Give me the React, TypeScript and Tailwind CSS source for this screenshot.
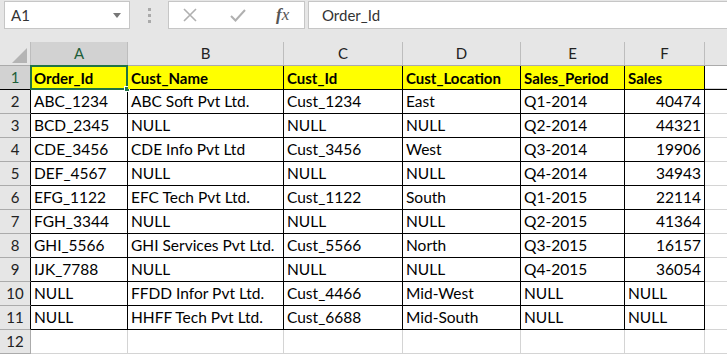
const cols = [
  { key: "A", w: "w-[97px]" },
  { key: "B", w: "w-[156px]" },
  { key: "C", w: "w-[119px]" },
  { key: "D", w: "w-[118px]" },
  { key: "E", w: "w-[104px]" },
  { key: "F", w: "w-[80px]" },
];

const header = ["Order_Id", "Cust_Name", "Cust_Id", "Cust_Location", "Sales_Period", "Sales"];

const rows = [
  ["ABC_1234", "ABC Soft Pvt Ltd.", "Cust_1234", "East", "Q1-2014", "40474"],
  ["BCD_2345", "NULL", "NULL", "NULL", "Q2-2014", "44321"],
  ["CDE_3456", "CDE Info Pvt Ltd", "Cust_3456", "West", "Q3-2014", "19906"],
  ["DEF_4567", "NULL", "NULL", "NULL", "Q4-2014", "34943"],
  ["EFG_1122", "EFC Tech Pvt Ltd.", "Cust_1122", "South", "Q1-2015", "22114"],
  ["FGH_3344", "NULL", "NULL", "NULL", "Q2-2015", "41364"],
  ["GHI_5566", "GHI Services Pvt Ltd.", "Cust_5566", "North", "Q3-2015", "16157"],
  ["IJK_7788", "NULL", "NULL", "NULL", "Q4-2015", "36054"],
  ["NULL", "FFDD Infor Pvt Ltd.", "Cust_4466", "Mid-West", "NULL", "NULL"],
  ["NULL", "HHFF Tech Pvt Ltd.", "Cust_6688", "Mid-South", "NULL", "NULL"],
];

const FormulaBar = () => (
  <div className="flex h-[42px] bg-[#e6e6e6] pt-[1px]">
    <div className="ml-[4px] flex h-[28px] w-[126px] items-center justify-between border border-[#c6c6c6] bg-white pl-[6px] pr-[8px]">
      <span className="text-[15px] text-[#333]">A1</span>
      <svg width="8" height="5" viewBox="0 0 8 5">
        <path d="M0 0h8L4 5z" fill="#777" />
      </svg>
    </div>
    <div className="flex h-[28px] w-[38px] flex-col items-center justify-center gap-[3px]">
      <span className="h-[3px] w-[3px] bg-[#aaa]" />
      <span className="h-[3px] w-[3px] bg-[#aaa]" />
      <span className="h-[3px] w-[3px] bg-[#aaa]" />
    </div>
    <div className="flex h-[28px] w-[137px] items-center border border-[#c6c6c6] bg-white">
      <svg className="ml-[14px]" width="14" height="14" viewBox="0 0 14 14">
        <path d="M1 1L13 13M13 1L1 13" stroke="#b0b0b0" strokeWidth="1.6" />
      </svg>
      <svg className="ml-[33px]" width="16" height="13" viewBox="0 0 16 13">
        <path d="M1 7l4.5 4.5L15 1" stroke="#b0b0b0" strokeWidth="2" fill="none" />
      </svg>
      <span className="ml-[30px] font-['Liberation_Serif'] text-[17px] italic text-[#555]">
        <span className="font-bold">f</span>x
      </span>
    </div>
    <div className="ml-[3px] flex h-[28px] flex-1 items-center border border-r-0 border-[#c6c6c6] bg-white pl-[13px]">
      <span className="text-[15px] text-[#333]">Order_Id</span>
    </div>
  </div>
);

export default function App() {
  return (
    <div className="h-[356px] w-[727px] overflow-hidden bg-white font-['Lato','Liberation_Sans',sans-serif] text-black">
      <FormulaBar />
      {/* column headers */}
      <div className="flex h-[24px] border-b border-[#ababab] bg-[#e6e6e6]">
        <div className="flex w-[31px] items-end justify-end border-r border-[#bdbdbd] pb-[2px] pr-[3px]">
          <svg width="15" height="15" viewBox="0 0 15 15">
            <path d="M15 0V15H0z" fill="#b4b4b4" />
          </svg>
        </div>
        {cols.map((c) => (
          <div
            key={c.key}
            className={`${c.w} flex items-center justify-center border-r border-[#bdbdbd] text-[15px] ${
              c.key === "A" ? "bg-[#d2d2d2] text-[#1e5e3a]" : "text-[#222]"
            }`}
          >
            {c.key}
          </div>
        ))}
        <div className="flex-1" />
      </div>
      {/* header row */}
      <div className="flex h-[24px] border-b border-black">
        <div className="flex w-[31px] items-center justify-center border-r border-black bg-[#d2d2d2] text-[15px] text-[#1e5e3a]">
          1
        </div>
        {header.map((h, i) => (
          <div
            key={h}
            className={`${cols[i].w} relative flex items-center border-r border-black bg-[#ffff00] pl-[3px] pt-[1px] text-[15px] font-bold`}
          >
            {h}
            {i === 0 && (
              <div className="absolute -left-[1px] -top-[1px] h-[25px] w-[98px] border-2 border-[#217346]">
                <div className="absolute -bottom-[4px] -right-[4px] h-[6px] w-[6px] border border-white bg-[#217346]" />
              </div>
            )}
          </div>
        ))}
        <div className="flex-1 border-b border-[#d4d4d4]" />
      </div>
      {rows.map((r, ri) => (
        <div key={ri} className="flex h-[24px]">
          <div className="flex w-[31px] items-center justify-center border-b border-r border-[#ababab] border-r-black bg-[#e6e6e6] text-[15px] text-[#222]">
            {ri + 2}
          </div>
          {r.map((v, ci) => (
            <div
              key={ci}
              className={`${cols[ci].w} flex items-center border-b border-r border-black pt-[1px] text-[15.5px] ${
                ci === 5 && v !== "NULL" ? "justify-end pr-[3px]" : "pl-[3px]"
              }`}
            >
              {v}
            </div>
          ))}
          <div className="flex-1 border-b border-[#d4d4d4]" />
        </div>
      ))}
      <div className="flex h-[24px]">
        <div className="flex w-[31px] items-center justify-center border-b border-r border-[#ababab] bg-[#e6e6e6] text-[15px] text-[#222]">
          12
        </div>
        {cols.map((c) => (
          <div key={c.key} className={`${c.w} border-b border-r border-[#d4d4d4]`} />
        ))}
        <div className="flex-1 border-b border-[#d4d4d4]" />
      </div>
    </div>
  );
}
